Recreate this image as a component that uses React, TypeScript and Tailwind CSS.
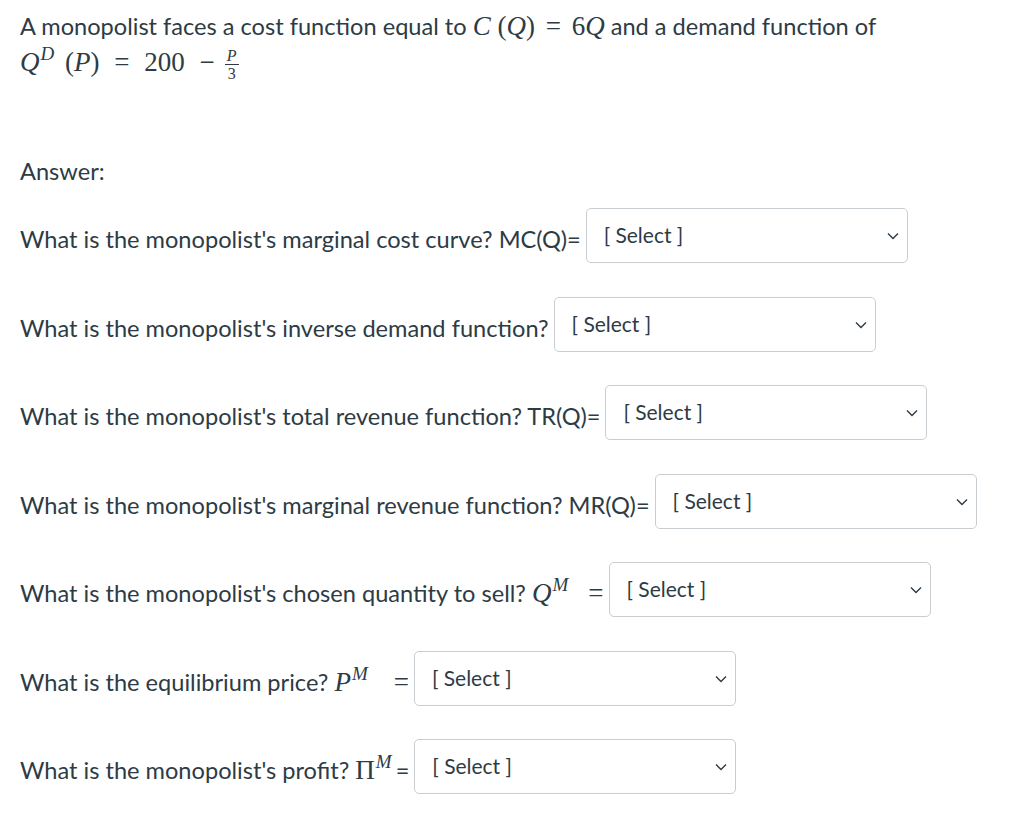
import React from "react";

const M: React.FC<{ children: React.ReactNode; className?: string }> = ({ children, className }) => (
  <span className={"font-['Liberation_Serif',serif] text-[27px] " + (className ?? "")}>{children}</span>
);

const I: React.FC<{ children: React.ReactNode }> = ({ children }) => <i className="italic">{children}</i>;

const Sup: React.FC<{ children: React.ReactNode }> = ({ children }) => (
  <sup className="top-[-0.6em] ml-[1px] text-[19px] italic">{children}</sup>
);

const Select: React.FC = () => (
  <div className="ml-[5px] flex h-[55px] w-[322px] shrink-0 items-center justify-between rounded-[5px] border border-[#c7cdd1] bg-white pl-[17px] pr-[8px] text-[21px] text-[#2d3b45]">
    <span>[ Select ]</span>
    <svg width="12" height="8" viewBox="0 0 12 8" className="mt-[2px]">
      <path d="M1 1.5 L6 6.5 L11 1.5" fill="none" stroke="#2d3b45" strokeWidth="1.4" />
    </svg>
  </div>
);

const Row: React.FC<{ children: React.ReactNode; mt: string }> = ({ children, mt }) => (
  <div className={"flex items-baseline " + mt}>
    <div className="relative top-[5px] whitespace-nowrap">{children}</div>
    <Select />
  </div>
);

export default function App() {
  return (
    <div className="min-h-[832px] bg-white pl-[20px] pt-[8px] font-['Lato',sans-serif] text-[23.6px] text-[#2d3b45]">
      <div className="leading-[36px]">
        A monopolist faces a cost function equal to{" "}
        <M>
          <I>C</I> (<I>Q</I>) <span className="mx-[4px]">=</span> 6<I>Q</I>
        </M>{" "}
        and a demand function of
        <br />
        <M>
          <I>Q</I>
          <Sup>D</Sup> <span className="ml-[4px]">(</span>
          <I>P</I>) <span className="mx-[8px]">=</span> 200 <span className="mx-[8px]">−</span>
          <span className="ml-[2px] inline-flex flex-col items-center align-middle text-[16px] leading-[13px]">
            <span className="italic">P</span>
            <span className="my-[2px] h-px w-[14px] bg-[#2d3b45]" />
            <span>3</span>
          </span>
        </M>
      </div>

      <div className="mt-[74px]">Answer:</div>

      <Row mt="mt-[18px]">What is the monopolist's marginal cost curve? MC(Q)=</Row>
      <Row mt="mt-[34px]">What is the monopolist's inverse demand function?</Row>
      <Row mt="mt-[33px]">What is the monopolist's total revenue function? TR(Q)=</Row>
      <Row mt="mt-[34px]">What is the monopolist's marginal revenue function? MR(Q)=</Row>
      <Row mt="mt-[33px]">
        What is the monopolist's chosen quantity to sell?{" "}
        <M>
          <I>Q</I>
          <Sup>M</Sup>
          <span className="ml-[20px]">=</span>
        </M>
      </Row>
      <Row mt="mt-[34px]">
        What is the equilibrium price?{" "}
        <M>
          <I>P</I>
          <Sup>M</Sup>
          <span className="ml-[26px]">=</span>
        </M>
      </Row>
      <Row mt="mt-[33px]">
        What is the monopolist's profit?{" "}
        <M>
          Π<Sup>M</Sup>
        </M>
        <span className="ml-[4px]">=</span>
      </Row>
    </div>
  );
}
